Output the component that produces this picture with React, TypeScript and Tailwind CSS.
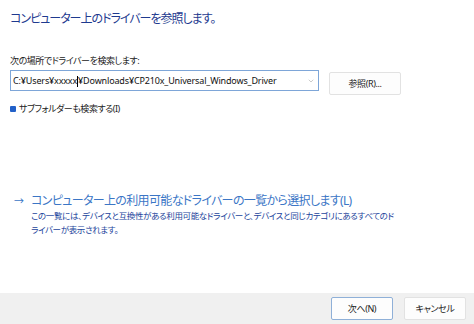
import { ChevronDown } from "lucide-react";

const jp = "font-['Noto_Sans','Noto_Sans_CJK_JP',sans-serif] [font-feature-settings:'palt']";

const App = () => {
  return (
    <div className={`w-[474px] h-[324px] bg-white flex flex-col overflow-hidden ${jp}`}>
      <div className="flex-1 flex flex-col px-[10px]">
        <h1 className="mt-[9px] text-[12px] leading-[20px] text-[#1e3a8f] tracking-[-1px]">
          コンピューター上のドライバーを参照します。
        </h1>

        <p className="mt-[25px] text-[9px] leading-[13px] text-[#222] tracking-[-0.45px]">
          次の場所でドライバーを検索します:
        </p>

        <div className="mt-[3px] flex items-start gap-[10px]">
          <div className="w-[309px] h-[21px] border border-[#7ea6d8] bg-white flex items-center pl-[2px] pr-[3px]">
            <span className="flex-1 text-[9px] text-[#111] tracking-[-0.15px] whitespace-nowrap overflow-hidden">
              C:¥Users¥xxxxx<span className="inline-block w-[1px] h-[11px] bg-black align-middle" />¥Downloads¥CP210x_Universal_Windows_Driver
            </span>
            <ChevronDown size={8} strokeWidth={1.5} className="text-[#999]" />
          </div>
          <button className="mt-[2px] w-[72px] h-[23px] border border-[#e2e2e2] bg-[#fdfdfd] rounded-[2px] text-[9px] text-[#222] tracking-[-0.4px]">
            参照(R)...
          </button>
        </div>

        <label className="mt-[7px] flex items-center gap-[3px] text-[9px] text-[#222] tracking-[-0.45px]">
          <span className="w-[6px] h-[6px] bg-[#2260c8] rounded-[1px]" />
          サブフォルダーも検索する(I)
        </label>

        <div className="mt-[77px] flex items-start pl-[4px]">
          <span className="w-[17px] text-[10px] leading-[16px] text-[#3b76c6]">→</span>
          <div className="flex flex-col">
            <span className="text-[12px] leading-[16px] text-[#3b76c6] tracking-[-0.65px]">
              コンピューター上の利用可能なドライバーの一覧から選択します(L)
            </span>
            <span className="text-[8.5px] leading-[14px] text-[#23459c] tracking-[-0.35px] whitespace-nowrap">
              この一覧には、デバイスと互換性がある利用可能なドライバーと、デバイスと同じカテゴリにあるすべてのド
              <br />
              ライバーが表示されます。
            </span>
          </div>
        </div>
      </div>

      <div className="h-[31px] bg-[#f0f0f0] flex items-center justify-end gap-[11px] pr-[8px]">
        <button className="w-[62px] h-[23px] border border-[#8fb0d8] bg-[#fdfdfd] rounded-[2px] text-[9px] text-[#222] tracking-[-0.4px]">
          次へ(N)
        </button>
        <button className="w-[62px] h-[23px] border border-[#e2e2e2] bg-[#fdfdfd] rounded-[2px] text-[9px] text-[#222] tracking-[-0.4px]">
          キャンセル
        </button>
      </div>
    </div>
  );
};

export default App;
